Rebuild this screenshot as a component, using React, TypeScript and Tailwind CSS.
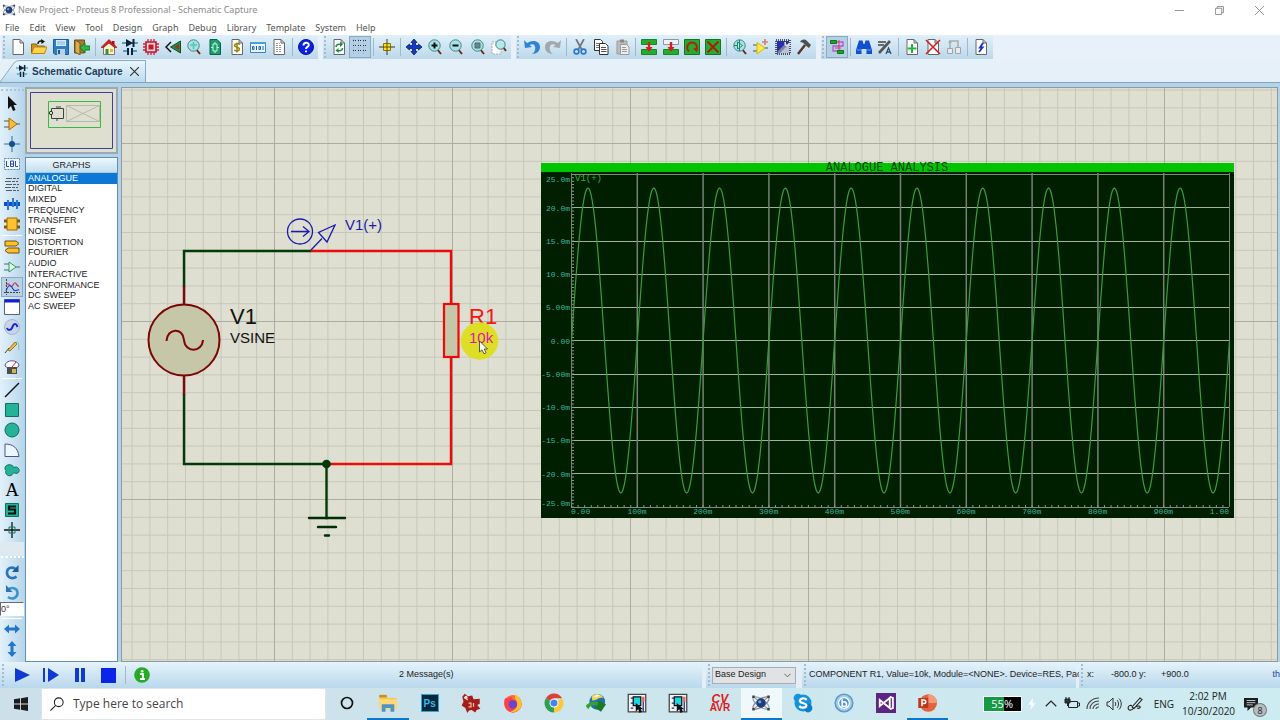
import type { ReactNode } from "react";

type Item = { label: string; icon: ReactNode; pressed?: boolean } | null;

const Icon = ({ children, size = "h-4 w-4", box = "0 0 16 16" }: { children: ReactNode; size?: string; box?: string }) => (
  <svg viewBox={box} className={`${size} shrink-0`} fill="none" aria-hidden="true">
    {children}
  </svg>
);

const page = <path d="M3 .5h7l3.500 3.500v11.500H3z M10 .5V4h3.500" fill="#fff" stroke="#666" />;

const lens = (
  <>
    <path d="M10 10l4 5" stroke="#6b2a14" strokeWidth="2" />
    <circle cx="7.500" cy="6.500" r="5.700" fill="#a5e4e4" stroke="#4c8184" />
  </>
);

const gates = (
  <>
    <path d="M0 4h16M1 12h4M11 12h4" stroke="#2d86b8" strokeWidth="1.400" />
    <path d="M4 0l7 4-7 4zM10.500 0h2v8h-2z" fill="#0d2538" />
    <path d="M6 9v7M10 9v7" stroke="#0d2538" strokeWidth="2" />
  </>
);

const atom = (
  <>
    <path d="M2 3l12 10M14 3L2 13" stroke="#b99a63" />
    <ellipse cx="8" cy="8" rx="7.500" ry="3" stroke="#8aa7c9" transform="rotate(35 8 8)" />
    <ellipse cx="8" cy="8" rx="7.500" ry="3" stroke="#7d8ba3" transform="rotate(-35 8 8)" />
    <circle cx="8" cy="8" r="3.800" fill="#1d3f7d" />
    <circle cx="7" cy="7" r="1.300" fill="#7b9fd0" />
    <path d="M1 2h2v2H1zM13 2h2v2h-2zM1 12h2v2H1zM13 12h2v2h-2z" fill="#39424e" />
  </>
);

const fileTools: Item[] = [
  { label: "New", icon: <Icon>{page}</Icon> },
  {
    label: "Open",
    icon: (
      <Icon>
        <path d="M.5 14V5h5l1 2h7v7z" fill="#c9941c" stroke="#8c6410" />
        <path d="M.5 14.500L3 8h13l-2.500 6.500z" fill="#ffd24d" stroke="#b98515" />
        <path d="M7 5c0-2.500 2-3.500 4-2.500" stroke="#111" strokeWidth="1.500" />
        <path d="M10 0l4 2.500L10.500 5z" fill="#111" />
      </Icon>
    ),
  },
  {
    label: "Save",
    icon: (
      <Icon>
        <path d="M.5 .5h15v15H2l-1.500-1.500z" fill="#2f7fc4" stroke="#1d5f9c" />
        <path d="M3 1h10v6H3z" fill="#d9ecf9" />
        <path d="M4 3h8M4 5h8" stroke="#7cb5dc" />
        <path d="M4 10h8v6H4z" fill="#b6d2e5" />
        <path d="M5 11h2v4H5z" fill="#24567f" />
      </Icon>
    ),
  },
  {
    label: "Exit",
    icon: (
      <Icon>
        <path d="M.5 1h10v13H.5z" fill="#a87a30" stroke="#6f4d18" />
        <path d="M1 1l5 3v12l-5-3z" fill="#d9ac55" stroke="#7b551d" />
        <path d="M6 8.500L11 4v3h5v4h-5v3z" fill="#31b845" stroke="#187a28" />
      </Icon>
    ),
  },
  null,
  {
    label: "Home",
    icon: (
      <Icon>
        <path d="M11 2h2.500v5H11z" fill="#a11" />
        <path d="M2.500 8L8 3l5.500 5v7.500h-11z" fill="#fff6cf" stroke="#777" />
        <path d="M0 8.500L8 .5l8 8h-2.500L8 4 2.500 8.500z" fill="#d81f1f" stroke="#8c0c0c" strokeWidth=".6" />
        <path d="M4.500 10h3v5.500h-3z" fill="#3d8d3d" />
        <path d="M9 10h3v3H9z" fill="#e9b42e" />
      </Icon>
    ),
  },
  { label: "Schematic", icon: <Icon>{gates}</Icon> },
  {
    label: "PCB layout",
    icon: (
      <Icon>
        <path d="M5 0v16M8 0v16M11 0v16M0 5h16M0 8h16M0 11h16" stroke="#d02438" strokeWidth="1.300" />
        <path d="M3 3h10v10H3z" fill="#f7d5da" stroke="#c5152c" strokeWidth="1.600" />
        <path d="M5.500 5.500h5v5h-5z" fill="#c5152c" />
      </Icon>
    ),
  },
  {
    label: "3D view",
    icon: (
      <Icon>
        <path d="M6 3L1 8l5 5" stroke="#111" strokeWidth="1.500" />
        <path d="M15.500 2v12L5.500 8z" fill="#18944a" stroke="#0b5326" />
        <path d="M9 8l5-3v6z" fill="#b32a22" />
      </Icon>
    ),
  },
  {
    label: "Gerber viewer",
    icon: (
      <Icon>
        {lens}
        <path d="M4 6h7M7.500 3v7" stroke="#5cc4b0" strokeWidth="1.600" />
      </Icon>
    ),
  },
  {
    label: "Design explorer",
    icon: (
      <Icon>
        <path d="M3 .5h7l3.500 3.500v11.500H3z" fill="#18a071" stroke="#0c6144" />
        <path d="M6 5h4v7H6zM8 3v2M8 12v2M4 8.500h2M10 8.500h2" stroke="#c8f4de" />
      </Icon>
    ),
  },
  {
    label: "Bill of materials",
    icon: (
      <Icon>
        {page}
        <path d="M11 5.500C9 4 5.500 4.500 5.500 6.500s5 1.500 5 3.500S7 12.500 5 11M8 3.500v10" stroke="#9a8400" strokeWidth="1.500" />
      </Icon>
    ),
  },
  {
    label: "Source code",
    icon: (
      <Icon>
        <path d="M.5 3.500h15v10H.5z" fill="#e8f8ff" stroke="#3d83bd" />
        <path d="M0 3h16v2H0z" fill="#4a9fd8" />
        <path d="M2.500 7.500h1.500v3H2.500zM6.500 7v4M9 7.500h1.500v3H9zM13 7v4" stroke="#1c60c8" />
      </Icon>
    ),
  },
  {
    label: "Project notes",
    icon: (
      <Icon>
        {page}
        <path d="M5 4.500h4M5 6.500h6M5 8.500h6M5 10.500h6M5 12.500h6" stroke="#999" strokeDasharray="2 1" />
      </Icon>
    ),
  },
  null,
  {
    label: "Help",
    icon: (
      <Icon>
        <circle cx="8" cy="8" r="7.500" fill="#0a22e0" stroke="#061599" />
        <path d="M5.500 6.500C5.500 3 10.800 3 10.800 6 10.800 8 8 7.800 8 10M8 11.500v1.800" stroke="#fff" strokeWidth="1.900" />
      </Icon>
    ),
  },
];

const viewTools: Item[] = [
  {
    label: "Redraw",
    icon: (
      <Icon>
        {page}
        <path d="M5 8c0-3 3-3 5-2.500M11.500 9c0 3-3 3-5 2.500" stroke="#1b8a3d" strokeWidth="1.500" />
        <path d="M9 3v5l3-2.500zM7.500 9v5l-3-2.500z" fill="#1b8a3d" />
      </Icon>
    ),
  },
  {
    label: "Toggle grid",
    pressed: true,
    icon: (
      <Icon>
        <path d="M1.500 0v16M6.500 0v16M11.500 0v16" stroke="#9fb6c8" strokeDasharray="1 1" />
        <path d="M1 1.500h15M1 6.500h15M1 11.500h15" stroke="#22374c" strokeDasharray="1 1 1 2" />
      </Icon>
    ),
  },
  null,
  {
    label: "Origin",
    icon: (
      <Icon>
        <path d="M8 0v16M0 8h16" stroke="#333" />
        <path d="M4.500 4.500h7v7h-7z" fill="#ffe21f" stroke="#8b7400" />
        <path d="M8 4v8M4 8h8" stroke="#615000" />
      </Icon>
    ),
  },
  null,
  {
    label: "Pan",
    icon: (
      <Icon>
        <path d="M8 0l3 3.500H9.500v3h3V5L16 8l-3.500 3V9.500h-3v3H11L8 16l-3-3.500h1.500v-3h-3V11L0 8l3.500-3v1.500h3v-3H5z" fill="#1638c8" stroke="#0a1f66" strokeWidth=".8" />
      </Icon>
    ),
  },
  { label: "Zoom in", icon: <Icon>{lens}<path d="M4.500 6.500h6M7.500 3.500v6" stroke="#111" strokeWidth="2" /></Icon> },
  { label: "Zoom out", icon: <Icon>{lens}<path d="M4.500 6.500h6" stroke="#111" strokeWidth="2" /></Icon> },
  { label: "Zoom all", icon: <Icon>{lens}<path d="M5 4h5v5H5z" fill="#64898b" stroke="#4b6d70" /></Icon> },
  {
    label: "Zoom area",
    icon: (
      <Icon>
        <path d="M1 3h9v12H1z" fill="#fff" stroke="#aaa" strokeDasharray="2 1" />
        <path d="M12 8l3 4" stroke="#6b2a14" strokeWidth="2" />
        <circle cx="9.500" cy="5.500" r="4.700" fill="#b5e8ec" stroke="#4c8184" />
      </Icon>
    ),
  },
];

const greenSquare = <path d="M.5 .5h15v15H.5z" fill="#22ad2c" stroke="#167520" />;

const blockArrow = (
  <>
    <path d="M8 3v6" stroke="#d81e1e" strokeWidth="2.400" />
    <path d="M4.500 8h7L8 13z" fill="#d81e1e" />
  </>
);

const editTools: Item[] = [
  {
    label: "Undo",
    icon: <Icon><path d="M0 1l1 8 7-1-2.500-2C10 4 12 7 11 11c-.5 2-1.500 3-3 4 5 0 8-3 8-7 0-6-7-8-13-4z" fill="#2d84d4" /></Icon>,
  },
  {
    label: "Redo",
    icon: <Icon><path d="M16 1l-1 8-7-1 2.500-2C6 4 4 7 5 11c.5 2 1.500 3 3 4-5 0-8-3-8-7 0-6 7-8 13-4z" fill="#a3a8ad" /></Icon>,
  },
  null,
  {
    label: "Cut",
    icon: (
      <Icon>
        <path d="M4 0l6 11M12 0L6 11" stroke="#6d7881" strokeWidth="1.700" />
        <circle cx="4.500" cy="12.500" r="2.400" stroke="#2877c8" strokeWidth="1.600" />
        <circle cx="11.500" cy="12.500" r="2.400" stroke="#2877c8" strokeWidth="1.600" />
      </Icon>
    ),
  },
  {
    label: "Copy",
    icon: (
      <Icon>
        <path d="M1.500 .5h6l2 2v9h-8z" fill="#fff" stroke="#333" />
        <path d="M3 4.500h5M3 6.500h5M3 8.500h5" stroke="#777" />
        <path d="M6.500 4.500h6l2.500 2.500v8.500H6.500z" fill="#fff" stroke="#333" />
        <path d="M8 8.500h5M8 10.500h5.500M8 12.500h5.500" stroke="#555" />
      </Icon>
    ),
  },
  {
    label: "Paste",
    icon: (
      <Icon>
        <path d="M2 2h10v13H2z" fill="#bdbdbd" stroke="#999" />
        <path d="M5 .5h4v3H5z" fill="#888" />
        <path d="M5.500 5.500h6l2.500 2.500v7.500H5.500z" fill="#eee" stroke="#999" />
        <path d="M7 8.500h4M7 10.500h5M7 12.500h5" stroke="#999" />
      </Icon>
    ),
  },
  null,
  {
    label: "Block copy",
    icon: (
      <Icon>
        <path d="M.5 .5h15v5H.5zM.5 10.500h15v5H.5z" fill="#22ad2c" stroke="#168a22" />
        {blockArrow}
      </Icon>
    ),
  },
  {
    label: "Block move",
    icon: (
      <Icon>
        <path d="M.5 .5h15v5H.5z" fill="#eef4fa" stroke="#8a97a5" />
        <path d="M.5 10.500h15v5H.5z" fill="#22ad2c" stroke="#168a22" />
        {blockArrow}
      </Icon>
    ),
  },
  {
    label: "Block rotate",
    icon: (
      <Icon>
        {greenSquare}
        <path d="M5 12.500C1.500 9 3.500 3.500 8 3.500s6.500 5 3.500 8" stroke="#b3201a" strokeWidth="2" />
        <path d="M9 9l5 0-1 4.500z" fill="#b3201a" />
      </Icon>
    ),
  },
  { label: "Block delete", icon: <Icon>{greenSquare}<path d="M2.500 2.500l11 11M13.500 2.500l-11 11" stroke="#b81414" strokeWidth="1.900" /></Icon> },
  null,
  { label: "Pick parts", icon: <Icon>{lens}<path d="M5.500 3l5 3.500-5 3.500zM2 6.500h3.500M7.500 1v11" stroke="#15877e" fill="#d2f7b8" /></Icon> },
  {
    label: "Make device",
    icon: (
      <Icon>
        <path d="M0 6h4M0 12h4M11 9h4" stroke="#555" />
        <path d="M4 3.500l8 5.500-8 6z" fill="#ffe94a" stroke="#d9b800" />
        <path d="M12 0v6M9 3h6" stroke="#dd7b7b" strokeWidth="1.700" />
      </Icon>
    ),
  },
  {
    label: "Packaging tool",
    icon: (
      <Icon>
        <path d="M1 1h14v14H1z" stroke="#222" strokeDasharray="1 1" strokeWidth="1.500" />
        <path d="M2 2h12v12H2z" fill="#262fae" />
        <path d="M4 14L14 4v10z" fill="#b9c0dc" />
        <path d="M3 14l8-8" stroke="#80849a" strokeWidth="2.600" />
        <path d="M10 3l.5 3 3 .5 1-2.500" stroke="#dfe3ea" strokeWidth="1.600" />
      </Icon>
    ),
  },
  {
    label: "Decompose",
    icon: (
      <Icon>
        <path d="M2 15L9 6" stroke="#593524" strokeWidth="2.400" />
        <path d="M4 3c2-3 5-3 7-1l4 4-2 3-4-3C8 4 6 3 4 3z" fill="#4c5053" />
      </Icon>
    ),
  },
];

const designTools: Item[] = [
  {
    label: "Wire auto-router",
    pressed: true,
    icon: (
      <Icon>
        <path d="M7 3h7v4H4v5h5" stroke="#b05ad0" strokeWidth="1.300" />
        <path d="M10 1v10M6 9h6" stroke="#e13b60" />
        <path d="M1.500 1.500h6v3h-6zM8.500 11.500h6v3h-6z" fill="#1ba530" stroke="#0b7518" />
      </Icon>
    ),
  },
  null,
  {
    label: "Search",
    icon: (
      <Icon>
        <path d="M3 1.500h3.500L7.500 5h1l1-3.500H13L16 11v4h-5.500v-5h-5v5H0v-4z" fill="#124fd0" />
        <path d="M1 11h4M11 11h4" stroke="#6ca0ff" />
      </Icon>
    ),
  },
  {
    label: "Property assignment",
    icon: (
      <Icon>
        <path d="M1 3h8M1 6h6" stroke="#444" strokeWidth="1.500" />
        <path d="M2 14L13 2" stroke="#555" strokeWidth="2.600" />
        <path d="M9 15l2.500-6 2.500 6M10 13h3" stroke="#33506b" strokeWidth="1.300" />
      </Icon>
    ),
  },
  null,
  { label: "New sheet", icon: <Icon>{page}<path d="M8 5v9M3.500 9.500h9" stroke="#23b638" strokeWidth="2" /></Icon> },
  { label: "Remove sheet", icon: <Icon>{page}<path d="M1 1l14 14M15 1L1 15" stroke="#d41a1a" strokeWidth="1.500" /></Icon> },
  {
    label: "Exit to parent",
    icon: (
      <Icon>
        <path d="M4 9V2h8v6" stroke="#a9adb0" strokeWidth="1.500" />
        <path d="M2 4l2-3 2 3z" fill="#a9adb0" />
        <path d="M1.500 9.500h5v5h-5zM9.500 8.500h5v6h-5z" fill="#e8eaeb" stroke="#a0a4a7" />
      </Icon>
    ),
  },
  null,
  { label: "Electrical rules", icon: <Icon>{page}<path d="M10 4L7 8.500h2.500L6 13" stroke="#1836c8" strokeWidth="1.900" /></Icon> },
];

const teal = { fill: "#25b397", stroke: "#0f6e5c" };

const palette: Item[] = [
  { label: "Selection", icon: <Icon><path d="M4 0v13l3-3 2 5 2.500-1-2-5H13z" fill="#111" /></Icon> },
  { label: "Component", icon: <Icon><path d="M0 5h5M0 11h5M12 8h4" stroke="#555" /><path d="M5 2l8 6-8 6z" fill="#f7bd3a" stroke="#a86f00" /></Icon> },
  { label: "Junction", icon: <Icon><path d="M8 0v16M0 8h16" stroke="#2a6da3" /><circle cx="8" cy="8" r="3" fill="#124f91" /></Icon> },
  {
    label: "Wire label",
    icon: (
      <Icon>
        <path d="M.5 2.500h15v11H.5z" fill="#eef6fd" stroke="#5f83b5" strokeDasharray="2 1" />
        <path d="M2.500 5v5.500h2.500M6.500 5v5.500h3v-5.500h-3M6.500 8h3M11.500 5v5.500h2.500" stroke="#2b4ca8" />
      </Icon>
    ),
  },
  { label: "Text script", icon: <Icon><path d="M2 2.500h13M1 5.500h13M2 8.500h13M1 11.500h13M2 14.500h13" stroke="#555b61" strokeDasharray="6 1 3 1" /></Icon> },
  { label: "Bus", icon: <Icon><path d="M0 8h16" stroke="#0c4fc9" strokeWidth="4" /><path d="M4 4v10M9 2v9M13 4v9" stroke="#2a78dc" strokeWidth="2" /></Icon> },
  { label: "Subcircuit", icon: <Icon><path d="M0 5h16M0 11h16" stroke="#7b5a10" strokeWidth="3" /><path d="M3 2h10v12H3z" fill="#ffc22e" stroke="#986a00" /></Icon> },
  null,
  { label: "Terminals", icon: <Icon><path d="M1 2h11l3 2.500L12 7H1zM15 9H4l-3 2.500L4 14h11z" fill="#ffbf26" stroke="#6e5110" /></Icon> },
  { label: "Device pins", icon: <Icon><path d="M0 5h5M0 11h5M12 8h4" stroke="#4b6b74" /><path d="M5 3l7 5-7 5z" stroke="#22a24d" fill="#e8fbef" /></Icon> },
  {
    label: "Graph mode",
    pressed: true,
    icon: (
      <Icon>
        <path d="M2.500 0v16M0 13.500h16" stroke="#444" strokeDasharray="2 1" />
        <path d="M2 7c3-7 4 5 7-1s3 2 6 1" stroke="#cf2a50" strokeWidth="1.200" />
        <path d="M2 12c3-8 5-6 7-2s4 0 6 1" stroke="#2a3fc8" strokeWidth="1.200" />
      </Icon>
    ),
  },
  { label: "Tape", icon: <Icon><path d="M.5 .5h15v15H.5z" fill="#fff" stroke="#5f6468" /><path d="M.5 .5h15v3H.5z" fill="#1220ce" /></Icon> },
  { label: "Generator", icon: <Icon><circle cx="8" cy="8" r="7.500" fill="#c9d3ea" stroke="#a8b4ca" /><path d="M3 9c1 3 4 2 5 0s1-4 3-4 2 2 2.500 3" stroke="#1726cf" strokeWidth="2" /></Icon> },
  { label: "Probe", icon: <Icon><path d="M1 14l4-5" stroke="#444" /><path d="M4 11l7-8 2 2-7 7z" fill="#eabf45" stroke="#99741a" /><path d="M12 3c4-1 2 5 3 8" stroke="#8bb4bd" /></Icon> },
  {
    label: "Instruments",
    icon: (
      <Icon>
        <path d="M1 7C1 0 15 0 15 7l-3 2H4z" fill="#fff" stroke="#5a53a1" />
        <path d="M8 8l4-5" stroke="#d22" />
        <path d="M3 8h10v7H3z" fill="#4d4d4d" />
        <path d="M8 10h4v4H8z" fill="#d3b64a" />
      </Icon>
    ),
  },
  null,
  { label: "Line", icon: <Icon><path d="M1 15L15 1" stroke="#111" strokeWidth="1.500" /></Icon> },
  { label: "Box", icon: <Icon><path d="M1.500 1.500h13v13h-13z" {...teal} /></Icon> },
  { label: "Circle", icon: <Icon><circle cx="8" cy="8" r="7" {...teal} /></Icon> },
  { label: "Arc", icon: <Icon><path d="M1 14.500V2c8 0 13 4 14 12.500z" fill="#eef6fd" stroke="#4d5587" /></Icon> },
  { label: "Path", icon: <Icon><path d="M9.500 5.500C9 1.500 1 2 1 6c0 1.500 .5 2 1 2.500C0 13 7 16 9 11.500c.5-1 1-.8 1.500-.5 6 2 6-6 1-6-1 0-1.500 .8-2 .5z" {...teal} /></Icon> },
  { label: "Text", icon: <span className="font-['Liberation_Serif',serif] text-[19px] leading-4 text-black">A</span> },
  { label: "Symbol", icon: <Icon><path d="M1.500 1.500h13v13h-13z" {...teal} /><path d="M12 4.500H5v3h6v4H4" stroke="#08110f" strokeWidth="2.200" /></Icon> },
  { label: "Marker", icon: <Icon><path d="M8 0v16M0 8h16" stroke="#111" strokeWidth="1.300" /><path d="M5 5h6v6H5z" stroke="#12755c" /></Icon> },
];

const turns: Item[] = [
  { label: "Rotate clockwise", icon: <Icon><path d="M12.500 12.500c-4 3.500-10 1-9.500-4.500C3.500 3 9 2.500 12 5.500" stroke="#2876b8" strokeWidth="2.600" /><path d="M14.500 1v7H8z" fill="#1b5d9c" /></Icon> },
  { label: "Rotate anti-clockwise", icon: <Icon><path d="M4 13c4 3 10 1 9.500-4.500C13 3.500 7 3 4.500 5.500" stroke="#3d92cc" strokeWidth="2.600" /><path d="M2 1v7h6.500z" fill="#2876b8" /></Icon> },
];

const mirrors: Item[] = [
  { label: "Mirror horizontally", icon: <Icon><path d="M0 8l5-4.500v3h6v-3L16 8l-5 4.500v-3H5v3z" fill="#2277cc" /></Icon> },
  { label: "Mirror vertically", icon: <Icon><path d="M8 0l4.500 5h-3v6h3L8 16l-4.500-5h3V5h-3z" fill="#2277cc" /></Icon> },
];

const menus = ["File", "Edit", "View", "Tool", "Design", "Graph", "Debug", "Library", "Template", "System", "Help"];

const graphs = ["ANALOGUE", "DIGITAL", "MIXED", "FREQUENCY", "TRANSFER", "NOISE", "DISTORTION", "FOURIER", "AUDIO", "INTERACTIVE", "CONFORMANCE", "DC SWEEP", "AC SWEEP"];

const ToolGroup = ({ items, width, name }: { items: Item[]; width: string; name: string }) => (
  <div role="toolbar" aria-label={name} className={`flex h-6 shrink-0 items-center bg-linear-to-b from-[#e1f0fa] to-[#bcd8ea] pl-px ${width}`}>
    <span className="mr-[3px] h-[22px] w-[2px] border-l-2 border-dotted border-[#a4bccd]" />
    <div className="mr-[2px] flex flex-1 items-center justify-between">
      {items.map((t, i) =>
        t ? (
          <button
            key={i}
            aria-label={t.label}
            title={t.label}
            className={`flex h-5 w-5 items-center justify-center ${t.pressed ? "bg-[#b5d0e5] outline outline-[#8ba9c0]" : ""}`}
          >
            {t.icon}
          </button>
        ) : (
          <span key={i} className="flex w-1 justify-center">
            <span className="h-[18px] w-px bg-[#9db9cc]" />
          </span>
        ),
      )}
    </div>
  </div>
);

const SideButtons = ({ items }: { items: Item[] }) => (
  <>
    {items.map((t, i) =>
      t ? (
        <button
          key={i}
          aria-label={t.label}
          title={t.label}
          className={`flex h-5 w-[22px] shrink-0 items-center justify-center ${t.pressed ? "bg-[#b9d3e6] outline -outline-offset-1 outline-[#8ba9c0]" : ""}`}
        >
          {t.icon}
        </button>
      ) : (
        <span key={i} className="my-px h-px w-5 shrink-0 bg-white" />
      ),
    )}
  </>
);

const wave = () => {
  const pts: string[] = [];
  for (let i = 0; i <= 600; i++) {
    const x = 571.5 + (658 * i) / 600;
    const y = 340.5 - 152.5 * Math.sin((2 * Math.PI * i) / 60);
    pts.push(`${x.toFixed(1)},${y.toFixed(1)}`);
  }
  return pts.join(" ");
};

const yLabels = ["25.0m", "20.0m", "15.0m", "10.0m", "5.00m", "0.00", "-5.00m", "-10.0m", "-15.0m", "-20.0m", "-25.0m"];
const xLabels = ["0.00", "100m", "200m", "300m", "400m", "500m", "600m", "700m", "800m", "900m", "1.00"];

const Chart = () => (
  <g fontFamily="'Liberation Mono', monospace">
    <rect x="541" y="163" width="693" height="355" fill="#001e00" />
    <rect x="541" y="163" width="693" height="9" fill="#00c400" />
    <text x="887" y="171" fontSize="12" textAnchor="middle" fill="#054505">ANALOGUE ANALYSIS</text>
    {yLabels.map((l, i) => (
      <g key={l}>
        <path d={`M571 ${Math.round(174 + i * 33.25) + 0.5}H1229`} stroke={i % 10 === 0 ? "#7f8d7f" : "#a3b0a0"} />
        <text x="570" y={i === 0 ? 182 : i === 10 ? 506 : 210.5 + (i - 1) * 33.25} fontSize="8" textAnchor="end" fill="#3cb5a2">{l}</text>
      </g>
    ))}
    {xLabels.map((l, i) => (
      <g key={l}>
        <path d={`M${571.5 + i * 65.8} 173V507`} stroke="#748174" strokeWidth={i % 10 === 0 ? 1 : 1.5} />
        <text
          x={i === 0 ? 571 : i === 10 ? 1229 : 637 + (i - 1) * 65.8}
          y="514"
          fontSize="8"
          textAnchor={i === 0 ? "start" : i === 10 ? "end" : "middle"}
          fill="#3cb5a2"
        >
          {l}
        </text>
      </g>
    ))}
    <path d="M573 174V507" stroke="#8b988b" strokeWidth="2" strokeDasharray="1 2.325" />
    <path d="M571 506H1229" stroke="#8b988b" strokeWidth="2" strokeDasharray="1 5.580" />
    <polyline points={wave()} fill="none" stroke="#3c9c3c" strokeWidth="1.200" />
    <text x="575" y="181" fontSize="9" fill="#36b436">V1(+)</text>
  </g>
);

const Schematic = () => (
  <svg className="absolute inset-0 h-full w-full" role="img" aria-label="Sine source driving a 10k resistor, with an analogue analysis graph">
    <defs>
      <pattern id="minor" x="9.600" y="1.600" width="17.800" height="17.800" patternUnits="userSpaceOnUse">
        <path d="M0 .5H17.800M.5 0V17.800" stroke="#c5c7b8" fill="none" />
      </pattern>
      <pattern id="major" x="152" y="55" width="178" height="178" patternUnits="userSpaceOnUse">
        <path d="M0 .5H178M.5 0V178" stroke="#abada1" fill="none" />
      </pattern>
    </defs>
    <rect width="100%" height="100%" fill="url(#minor)" />
    <rect width="100%" height="100%" fill="url(#major)" />
    <g transform="translate(-122 -88)" fontFamily="'Liberation Sans', Arial, sans-serif">
      <g fill="none" strokeWidth="2.400" strokeLinecap="square">
        <path d="M184 286V251H310M184 395V464H326.500V518" stroke="#023a08" />
        <path d="M309 518H345M318 527H336M325 535.500H329" stroke="#012d06" strokeLinecap="round" />
        <path d="M312 251H451V304M451 357V464H328" stroke="#ec0a0a" />
        <path d="M184 287V305M184 376V394" stroke="#7c0a0a" />
      </g>
      <circle cx="326.500" cy="464" r="4.300" fill="#023a08" />
      <circle cx="184" cy="340" r="35.500" fill="#c6c6a8" stroke="#7c0505" strokeWidth="2" />
      <path d="M166.500 341C167 328 183 327 184 340S202 353 203 340" fill="none" stroke="#7c0505" strokeWidth="2" />
      <rect x="444" y="304" width="14.500" height="53" fill="#c6c6a8" stroke="#ec0a0a" strokeWidth="2.200" />
      <g fill="none" stroke="#1a1ab0" strokeWidth="1.300">
        <circle cx="300" cy="231.500" r="12.500" />
        <path d="M291 231.500H309M303 226.500L309 231.500L303 236.500M311 250L322 238.500M335 225L318.500 232.500L327 242Z" />
      </g>
      <text x="345" y="230" fontSize="15" fill="#1a1ab0">V1(+)</text>
      <text x="230" y="324" fontSize="22" fill="#111">V1</text>
      <text x="230" y="343" fontSize="15" fill="#111">VSINE</text>
      <text x="469" y="324" fontSize="22" fill="#f01818">R1</text>
      <circle cx="479.500" cy="341" r="18.700" fill="#dede12" fillOpacity=".9" />
      <text x="469" y="343" fontSize="15" fill="#e012a8">10k</text>
      <path d="M479.500 341V352L482 349.800L484 353.800L486 352.800L484.200 349H487.500Z" fill="#fff" stroke="#333" strokeWidth=".8" />
      <Chart />
    </g>
  </svg>
);

const big = "h-5 w-5";

const library = (
  <Icon size={big}>
    <path d="M1 1h14v14H1z" fill="#f3f3f3" stroke="#444" />
    <path d="M3 4h2M3 8h2M3 12h2M13 6v9" stroke="#1d2f8c" />
    <path d="M5 3h6v7H5z" fill="#19d8e2" stroke="#111" />
    <path d="M12 3h2v4h-2z" fill="#e66" />
    <path d="M7 8v7l2-2 1 3 2-1-1-2h2z" fill="#111" />
  </Icon>
);

const apps: { name: string; icon: ReactNode; state?: "open" | "active" }[] = [
  { name: "Cortana", icon: <Icon><circle cx="8" cy="8" r="5.500" stroke="#111" strokeWidth="1.700" /></Icon> },
  {
    name: "File Explorer",
    state: "open",
    icon: (
      <Icon size={big}>
        <path d="M1 2h6l1 2h7v9H1z" fill="#f7c64d" />
        <path d="M1 1.500h6v2H1z" fill="#c98f1a" />
        <path d="M1 5h14v8H1z" fill="#ffd978" />
        <path d="M3 15V9h10v6h-3v-3H6v3z" fill="#4a94c8" />
      </Icon>
    ),
  },
  { name: "Photoshop", icon: <span className="flex h-[18px] w-[18px] items-center justify-center border border-[#2aa9d8] bg-[#06263a] text-[10px] font-bold text-[#35b9ec]">Ps</span> },
  {
    name: "Star",
    icon: (
      <Icon size={big}>
        <path d="M3 .5l2.500 2L9 2l1 3 5-.5v4l-2 1 2.500 3-3 1-1 2-3-2-2 .5L5 16l-1.500-4L.5 10 2 7 1 3z" fill="#a51e19" />
        <path d="M2.500 3.500l3 2M6 8h2v3H6M10 8v3" stroke="#f0c0a0" />
        <circle cx="4" cy="3.500" r="1.300" fill="#efe0d8" />
      </Icon>
    ),
  },
  {
    name: "Firefox",
    icon: (
      <Icon size={big}>
        <circle cx="8" cy="8.500" r="7" fill="#ff6b2c" />
        <path d="M2 4c2 1 3 0 4-1 2 1 1 3 4 3l5 2c0 4-3 7.500-7 7.500S1 12 1 8c0-2 0-3 1-4z" fill="#ff3f4e" />
        <path d="M10 1c4 3 6 6 4.500 10C13 14 9 16 6 15c5-2 6-5 5-8-1-2-2-3-1-6z" fill="#ffbf2e" />
        <circle cx="7.800" cy="9" r="3.400" fill="#6d45c9" />
      </Icon>
    ),
  },
  {
    name: "Chrome",
    icon: (
      <Icon size={big}>
        <path d="M8 8L1.500 4.200A7.500 7.500 0 0 1 14.500 4.200H8z" fill="#df4035" />
        <path d="M8 8L14.500 4.200A7.500 7.500 0 0 1 8 15.500z" fill="#fbc938" />
        <path d="M8 8v7.500A7.500 7.500 0 0 1 1.500 4.200z" fill="#2ca152" />
        <circle cx="8" cy="8" r="3.600" fill="#fff" />
        <circle cx="8" cy="8" r="2.800" fill="#4384ee" />
      </Icon>
    ),
  },
  {
    name: "Download Manager",
    icon: (
      <Icon size={big}>
        <circle cx="9" cy="7" r="6.300" fill="#236eb5" />
        <path d="M4.500 3c3-4 8-2 9.500 1-4-1-5 2-9 2z" fill="#f0d64b" />
        <path d="M6 3c2-2 4-2 5-1-2 1-3 2-5 1z" fill="#e8f4ff" />
        <path d="M0 10c2-3 8-4 11-2l-1 2c-4-1-7 0-8 3-1-1-2-2-2-3z" fill="#35a32c" />
        <path d="M10 6l6 3-4 6-6-4h3z" fill="#1c7a1f" />
      </Icon>
    ),
  },
  { name: "Proteus Library", icon: library },
  { name: "Proteus Library 2", icon: library },
  { name: "CodeVisionAVR", icon: <span className="flex flex-col items-center text-[10px] font-black leading-[8px] text-[#e01818]"><span className="text-[12px] italic leading-[10px]">CV</span>AVR</span> },
  { name: "Proteus 8", state: "active", icon: <Icon size={big}>{atom}</Icon> },
  {
    name: "Skype",
    icon: (
      <Icon size={big}>
        <circle cx="8" cy="8" r="6.800" fill="#1592dc" />
        <circle cx="4" cy="4" r="3.500" fill="#1592dc" />
        <circle cx="12" cy="12" r="3.500" fill="#0b7dcb" />
        <path d="M11 5.500C9 3.500 5 4.500 5.500 6.500S11 8 10.700 10 7 12.500 5 10.500" stroke="#fff" strokeWidth="1.800" />
      </Icon>
    ),
  },
  {
    name: "Messenger",
    icon: (
      <Icon size={big}>
        <circle cx="8" cy="8" r="7" fill="#a6cfee" stroke="#5b9bd0" strokeWidth="1.300" />
        <circle cx="8" cy="8" r="4.300" fill="#4f93cf" stroke="#fff" />
        <path d="M6.500 5v5.500h3.500M6.500 8c1.500-2 4-1 3.500 2.500" stroke="#fff" strokeWidth="1.200" />
      </Icon>
    ),
  },
  {
    name: "Visual Studio",
    icon: (
      <Icon size={big}>
        <path d="M0 0h16v16H0z" fill="#5c2584" />
        <path d="M3 5.500l8 6.500V4L3 10.500zM11 3l2.500 1v8L11 13" stroke="#fff" strokeWidth="1.500" />
      </Icon>
    ),
  },
  {
    name: "PowerPoint",
    state: "open",
    icon: (
      <Icon size={big}>
        <circle cx="9" cy="8" r="7" fill="#e4623d" />
        <path d="M9 1a7 7 0 0 1 7 7H9z" fill="#f29a7c" />
        <path d="M1 4h8v8H1z" fill="#bb3a1c" />
        <path d="M4 10.500v-5h1.500c2 0 2 2.800 0 2.800H4" stroke="#fff" strokeWidth="1.200" />
      </Icon>
    ),
  },
];

const Grip = () => <span className="mx-[2px] h-[22px] w-[2px] shrink-0 border-l-2 border-dotted border-[#a4bccd]" />;

export default function App() {
  return (
    <div className="flex h-screen min-h-[720px] flex-col overflow-hidden bg-white font-['Liberation_Sans',Arial,sans-serif] text-[9px] text-[#222]">
      <header className="shrink-0 font-['Noto_Sans',sans-serif]">
        <div className="flex h-5 items-center pl-[2px]">
          <Icon size="h-[14px] w-[14px]">{atom}</Icon>
          <h1 className="ml-[2px] flex-1 text-[9px] text-[#8b8b8b]">New Project - Proteus 8 Professional - Schematic Capture</h1>
          <div className="flex items-center gap-5 pr-[11px]">
            <button aria-label="Minimize" className="flex h-5 w-5 items-center justify-center"><Icon size="h-[9px] w-[9px]"><path d="M0 8h16" stroke="#999" strokeWidth="1.800" /></Icon></button>
            <button aria-label="Restore" className="flex h-5 w-5 items-center justify-center"><Icon size="h-[9px] w-[9px]"><path d="M1 4h11v11H1zM4 4V1h11v11h-3" stroke="#888" strokeWidth="1.600" /></Icon></button>
            <button aria-label="Close" className="flex h-5 w-5 items-center justify-center"><Icon size="h-[9px] w-[9px]"><path d="M0 0l16 16M16 0L0 16" stroke="#888" strokeWidth="1.600" /></Icon></button>
          </div>
        </div>
        <nav className="flex h-[15px] items-center gap-[10px] pl-[5px] text-[#555]">
          {menus.map((m) => (
            <button key={m}>{m}</button>
          ))}
        </nav>
      </header>

      <div className="flex h-[25px] shrink-0 items-start gap-[5px] bg-[#e8f1f9] pl-[2px]">
        <ToolGroup name="File" items={fileTools} width="w-[316px]" />
        <ToolGroup name="View" items={viewTools} width="w-[188px]" />
        <ToolGroup name="Edit" items={editTools} width="w-[300px]" />
        <ToolGroup name="Design" items={designTools} width="w-[172px]" />
      </div>

      <div className="flex h-[23px] shrink-0 items-end border-b border-[#7fa6c1] bg-[#e6f0f8]">
        <div className="relative flex h-[22px] w-[146px] items-center">
          <svg viewBox="0 0 146 22" className="absolute inset-0 h-full w-full" aria-hidden="true">
            <defs>
              <linearGradient id="tab" x2="0" y2="1">
                <stop stopColor="#eaf6fd" />
                <stop offset="1" stopColor="#bcdcf0" />
              </linearGradient>
            </defs>
            <path d="M0 22L14 3Q16 .5 20 .5H145.500V22" fill="url(#tab)" stroke="#88abc4" />
          </svg>
          <button className="relative ml-4 flex items-center gap-1 text-[10px] font-bold whitespace-nowrap text-[#1d3d5c]">
            <Icon size="h-3 w-3">{gates}</Icon>
            <span>Schematic Capture</span>
          </button>
          <button aria-label="Close tab" className="relative ml-1 flex h-4 w-4 shrink-0 items-center justify-center">
            <Icon size="h-[9px] w-[9px]"><path d="M0 0l16 16M16 0L0 16" stroke="#333" strokeWidth="2" /></Icon>
          </button>
        </div>
      </div>

      <main className="flex min-h-0 flex-1 bg-[#b5d3e8] pt-1">
        <aside className="flex w-[25px] shrink-0 flex-col items-center bg-linear-to-r from-[#e2f1fb] to-[#b6d5ea] pr-px">
          <span className="mt-[2px] mb-[3px] h-[2px] w-[23px] shrink-0 border-t-2 border-dotted border-[#a9c3d5]" />
          <SideButtons items={palette} />
          <span className="mt-[2px] h-[14px] w-full shrink-0 bg-[#dfe9f2]" />
          <span className="mb-1 h-[2px] w-[23px] shrink-0 border-t-2 border-dotted border-white" />
          <SideButtons items={turns} />
          <input aria-label="Rotation angle" defaultValue="0°" className="h-[14px] w-full shrink-0 border border-[#667] border-r-white border-b-white bg-white font-['Liberation_Sans',sans-serif] text-[9px] text-[#333]" />
          <span className="mt-[2px] h-px w-5 shrink-0 bg-white" />
          <SideButtons items={mirrors} />
        </aside>

        <section className="flex w-[93px] shrink-0 flex-col gap-[3px]">
          <div className="h-[67px] shrink-0 border-2 border-[#9ba9b2] bg-[#dedfcf] p-[3px]">
            <svg viewBox="0 0 83 57" className="h-full w-full" fill="none" aria-label="Overview">
              <path d="M.5 .5h82v56H.5z" stroke="#3e3e9e" />
              <path d="M18.500 9.500h52v26h-52z" stroke="#3bb843" />
              <path d="M36.500 13.500h33v16h-33zM36.500 13.500l33 16M69.500 13.500l-33 16" stroke="#b9bbaa" />
              <path d="M21.500 16.500h12v10h-12zM27 26v3M26 15h5" stroke="#3b463b" />
              <circle cx="21" cy="21" r="1.700" fill="#dedfcf" stroke="#333" />
            </svg>
          </div>
          <div className="flex min-h-0 flex-1 flex-col border border-[#5f8fb4] bg-white">
            <h2 className="h-[15px] shrink-0 border-b border-[#a9c8dc] bg-linear-to-b from-[#eef8fe] to-[#c4dfef] text-center leading-[15px]">GRAPHS</h2>
            <ul className="grid h-[139px] shrink-0 auto-rows-fr">
              {graphs.map((g, i) => (
                <li key={g} className={i === 0 ? "bg-[#0a78d4] text-white" : ""}>
                  <button className="flex h-full w-full items-center pl-[2px] text-left">{g}</button>
                </li>
              ))}
            </ul>
          </div>
        </section>

        <section className="relative mr-[2px] ml-[3px] min-w-0 flex-1 overflow-hidden border border-[#8d9ba3] bg-[#dedfd0]">
          <Schematic />
        </section>
      </main>

      <footer className="flex h-[26px] shrink-0 items-center bg-[#e3eef7]">
        <div className="flex h-full w-[702px] shrink-0 items-center bg-linear-to-b from-[#e6f3fb] to-[#b9d8ec]">
          <Grip />
          <div className="ml-[6px] flex items-center gap-[9px]">
            <button aria-label="Play" className="flex h-5 w-5 items-center justify-center"><Icon><path d="M1 1l15 7-15 7z" fill="#0f39d0" /></Icon></button>
            <button aria-label="Step" className="flex h-5 w-5 items-center justify-center"><Icon><path d="M0 1h2v14H0zM5 1l11 7-11 7z" fill="#0f39d0" /></Icon></button>
            <button aria-label="Pause" className="flex h-5 w-5 items-center justify-center"><Icon><path d="M3 1h4v14H3zM9 1h4v14H9z" fill="#0f39d0" /></Icon></button>
            <button aria-label="Stop" className="flex h-5 w-5 items-center justify-center"><Icon><path d="M0 1h15v15H0z" fill="#0b25e8" /></Icon></button>
          </div>
          <span className="mx-[6px] h-[18px] w-px bg-[#9db9cc]" />
          <button aria-label="Information" className="flex h-5 w-5 items-center justify-center">
            <Icon>
              <circle cx="8" cy="8" r="7.800" fill="#25ab25" />
              <path d="M6 7h3v5M6 12h5" stroke="#fff" strokeWidth="1.800" />
              <circle cx="8.200" cy="4.200" r="1.300" fill="#fff" />
            </Icon>
          </button>
          <p className="flex-1 pl-[247px]">2 Message(s)</p>
        </div>
        <div className="ml-1 flex h-full shrink-0 items-center bg-linear-to-b from-[#e6f3fb] to-[#b9d8ec]">
          <Grip />
          <div className="relative flex items-center">
            <select aria-label="Design variant" className="h-[17px] w-[84px] appearance-none rounded-none border border-[#a7adb2] bg-[#e1e2e3] pl-[2px] text-[9px]">
              <option>Base Design</option>
            </select>
            <svg viewBox="0 0 8 5" className="pointer-events-none absolute right-[5px] h-[5px] w-[7px]" fill="none" aria-hidden="true"><path d="M.5 .5L4 4 7.500 .5" stroke="#555" /></svg>
          </div>
        </div>
        <div className="ml-[6px] flex h-full w-[274px] shrink-0 items-center bg-linear-to-b from-[#e6f3fb] to-[#b9d8ec]">
          <Grip />
          <p className="ml-px whitespace-nowrap">COMPONENT R1, Value=10k, Module=&lt;NONE&gt;. Device=RES, Pac</p>
        </div>
        <div className="ml-[3px] flex h-full min-w-0 flex-1 items-center bg-linear-to-b from-[#e6f3fb] to-[#b9d8ec]">
          <Grip />
          <span className="ml-[2px] w-6">x:</span>
          <span className="w-7">-800.0</span>
          <span className="w-[22px]">y:</span>
          <span className="flex-1">+900.0</span>
          <span className="text-[#2a3c9c]">th</span>
        </div>
      </footer>

      <div className="flex h-8 shrink-0 bg-linear-to-r from-[#cddfe9] to-[#cdecf1] font-['Open_Sans',sans-serif]">
        <button aria-label="Start" className="flex w-[41px] shrink-0 items-center justify-center">
          <Icon size="h-[14px] w-[14px]"><path d="M0 2.500l7-1v6H0zM8 1.300L16 0v7.500H8zM0 8.500h7v6l-7-1zM8 8.500h8V16l-8-1.300z" fill="#1c1c1c" /></Icon>
        </button>
        <label className="flex w-[285px] shrink-0 items-center gap-[9px] border border-[#dde5ea] bg-white pl-2">
          <Icon size="h-[14px] w-[14px]"><circle cx="10" cy="6" r="5" stroke="#222" strokeWidth="1.200" /><path d="M6.500 9.500L.5 15.500" stroke="#222" strokeWidth="1.200" /></Icon>
          <input aria-label="Search" placeholder="Type here to search" className="min-w-0 flex-1 bg-transparent text-[12px] placeholder:text-[#444]" />
        </label>
        <div className="flex w-[622px] shrink-0">
          {apps.map((a) => (
            <button
              key={a.name}
              aria-label={a.name}
              className={`flex flex-1 items-center justify-center border-b-2 font-['Liberation_Sans',sans-serif] ${
                a.state === "active" ? "border-[#0b78cc] bg-[#eff8fb]" : a.state === "open" ? "border-[#0b78cc]" : "border-transparent"
              }`}
            >
              {a.icon}
            </button>
          ))}
        </div>
        <div className="flex min-w-0 flex-1 items-center justify-end text-[#222]">
          <span className="flex h-4 w-[39px] shrink-0 items-center justify-center border border-white bg-linear-to-r from-[#149a43] from-55% to-black to-55% text-[11px] text-white">55%</span>
          <div className="ml-1 flex shrink-0 items-center gap-[5px]">
            <Icon size="h-3 w-3"><path d="M9 0L3 9h4l-1 7 7-9H9z" fill="#f4fcff" /></Icon>
            <button aria-label="Hidden icons" className="flex h-5 w-4 items-center justify-center"><Icon size="h-3 w-3"><path d="M1 11l7-7 7 7" stroke="#222" strokeWidth="1.500" /></Icon></button>
            <Icon><path d="M4.500 5.500h9v6h-9zM14 7h1.500v3H14" stroke="#222" /><path d="M1 3h5v4H1zM2 1v2M5 1v2M3.500 7v3" stroke="#222" fill="#333" /></Icon>
            <Icon><path d="M2 13C2 7 7 2 14 2M5 13c0-5 4-8 9-8M8 13c0-3 3-5 6-5M11 13c0-1 1-2 3-2" stroke="#444" strokeWidth="1.100" /></Icon>
            <Icon><path d="M1 6h2l4-4v12L3 10H1zM9 6c1 1 1 3 0 4M11 4c2 2 2 6 0 8M13 2.500c3 3 3 8 0 11" stroke="#333" /></Icon>
            <Icon><path d="M5 11L13 2l2 1.500-8 9zM5 11l2 1.500M5 9.500c-5-1-5 5.500-1 4.500 3-1 4-4.500 8-4 3 1 0 3-2 2" stroke="#222" strokeWidth="1.100" /></Icon>
          </div>
          <span className="ml-[11px] shrink-0 text-[10px]">ENG</span>
          <time className="ml-2 w-[52px] shrink-0 text-center text-[10px] leading-[15px]">2:02 PM<br />10/30/2020</time>
          <button aria-label="Notifications" className="relative mr-[14px] ml-[10px] flex h-6 w-[22px] shrink-0 items-center">
            <Icon size="h-[14px] w-[14px]"><path d="M0 1h16v11H8l-4 4v-4H0z" fill="#1c1c1c" /><path d="M3 4h10M3 6.500h10M3 9h7" stroke="#cde" /></Icon>
            <span className="absolute right-0 bottom-0 flex h-3 w-3 items-center justify-center rounded-full bg-[#b5bdc1] text-[9px] leading-none ring-1 ring-[#777]">8</span>
          </button>
        </div>
      </div>
    </div>
  );
}
